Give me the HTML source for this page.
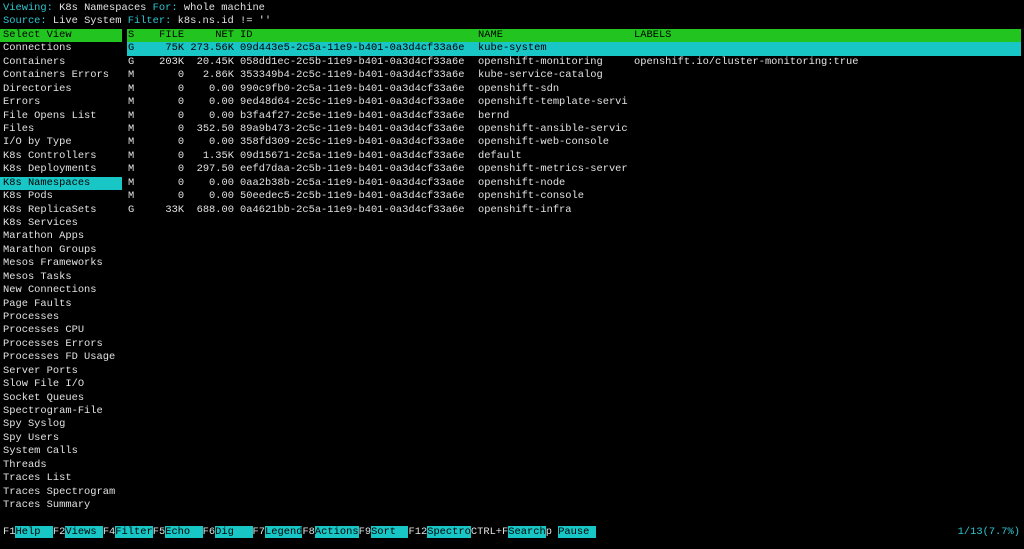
<!DOCTYPE html>
<html><head><meta charset="utf-8"><style>
html,body{margin:0;padding:0;background:#000;width:1024px;height:549px;overflow:hidden}
body{position:relative;font-family:"Liberation Mono","DejaVu Sans Mono",monospace;font-size:10.4px;color:#e2e2e2}
#w{position:absolute;left:0;top:1px;width:1024px;height:548px}
.r{position:absolute;left:0;width:1024px;height:13.43px;line-height:13.43px;white-space:pre}
.r span{position:absolute;top:0}
.c{color:#2fc6cf}
.a{left:3px}.s{left:128px}.i{left:240px}.n{left:478px}.l{left:634px}
.g{background:#22c520}.y{background:#18c6c6}
.bl{color:#000}
.h{background:#18c6c6;color:#000}
.bar{position:absolute;top:0;height:13.43px}
</style></head><body><div id="w">
<div class="r" style="top:0.5px"><span class="a"><span class="c" style="position:static">Viewing:</span> K8s Namespaces <span class="c" style="position:static">For:</span> whole machine</span></div>
<div class="r" style="top:14px"><span class="a"><span class="c" style="position:static">Source:</span> Live System <span class="c" style="position:static">Filter:</span> k8s.ns.id != ''</span></div>

<div class="r bl" style="top:27.9px"><div class="bar g" style="left:0;width:122px"></div><div class="bar g" style="left:127px;width:894px"></div><span class="a">Select View</span><span class="s">S    FILE     NET</span><span class="i">ID</span><span class="n">NAME</span><span class="l">LABELS</span></div>
<div class="r" style="top:41.3px"><div class="bar y" style="left:127px;width:894px"></div><span class="a">Connections</span><span class="s bl">G     75K 273.56K</span><span class="i bl">09d443e5-2c5a-11e9-b401-0a3d4cf33a6e</span><span class="n bl">kube-system</span></div>
<div class="r" style="top:54.7px"><span class="a">Containers</span><span class="s">G    203K  20.45K</span><span class="i">058dd1ec-2c5b-11e9-b401-0a3d4cf33a6e</span><span class="n">openshift-monitoring</span><span class="l">openshift.io/cluster-monitoring:true</span></div>
<div class="r" style="top:68.2px"><span class="a">Containers Errors</span><span class="s">M       0   2.86K</span><span class="i">353349b4-2c5c-11e9-b401-0a3d4cf33a6e</span><span class="n">kube-service-catalog</span></div>
<div class="r" style="top:81.6px"><span class="a">Directories</span><span class="s">M       0    0.00</span><span class="i">990c9fb0-2c5a-11e9-b401-0a3d4cf33a6e</span><span class="n">openshift-sdn</span></div>
<div class="r" style="top:95px"><span class="a">Errors</span><span class="s">M       0    0.00</span><span class="i">9ed48d64-2c5c-11e9-b401-0a3d4cf33a6e</span><span class="n">openshift-template-servi</span></div>
<div class="r" style="top:108.5px"><span class="a">File Opens List</span><span class="s">M       0    0.00</span><span class="i">b3fa4f27-2c5e-11e9-b401-0a3d4cf33a6e</span><span class="n">bernd</span></div>
<div class="r" style="top:121.9px"><span class="a">Files</span><span class="s">M       0  352.50</span><span class="i">89a9b473-2c5c-11e9-b401-0a3d4cf33a6e</span><span class="n">openshift-ansible-servic</span></div>
<div class="r" style="top:135.3px"><span class="a">I/O by Type</span><span class="s">M       0    0.00</span><span class="i">358fd309-2c5c-11e9-b401-0a3d4cf33a6e</span><span class="n">openshift-web-console</span></div>
<div class="r" style="top:148.8px"><span class="a">K8s Controllers</span><span class="s">M       0   1.35K</span><span class="i">09d15671-2c5a-11e9-b401-0a3d4cf33a6e</span><span class="n">default</span></div>
<div class="r" style="top:162.2px"><span class="a">K8s Deployments</span><span class="s">M       0  297.50</span><span class="i">eefd7daa-2c5b-11e9-b401-0a3d4cf33a6e</span><span class="n">openshift-metrics-server</span></div>
<div class="r" style="top:175.6px"><div class="bar y" style="left:0;width:122px"></div><span class="a bl">K8s Namespaces</span><span class="s">M       0    0.00</span><span class="i">0aa2b38b-2c5a-11e9-b401-0a3d4cf33a6e</span><span class="n">openshift-node</span></div>
<div class="r" style="top:189.1px"><span class="a">K8s Pods</span><span class="s">M       0    0.00</span><span class="i">50eedec5-2c5b-11e9-b401-0a3d4cf33a6e</span><span class="n">openshift-console</span></div>
<div class="r" style="top:202.5px"><span class="a">K8s ReplicaSets</span><span class="s">G     33K  688.00</span><span class="i">0a4621bb-2c5a-11e9-b401-0a3d4cf33a6e</span><span class="n">openshift-infra</span></div>
<div class="r" style="top:215.9px"><span class="a">K8s Services</span></div>
<div class="r" style="top:229.4px"><span class="a">Marathon Apps</span></div>
<div class="r" style="top:242.8px"><span class="a">Marathon Groups</span></div>
<div class="r" style="top:256.2px"><span class="a">Mesos Frameworks</span></div>
<div class="r" style="top:269.7px"><span class="a">Mesos Tasks</span></div>
<div class="r" style="top:283.1px"><span class="a">New Connections</span></div>
<div class="r" style="top:296.5px"><span class="a">Page Faults</span></div>
<div class="r" style="top:310px"><span class="a">Processes</span></div>
<div class="r" style="top:323.4px"><span class="a">Processes CPU</span></div>
<div class="r" style="top:336.8px"><span class="a">Processes Errors</span></div>
<div class="r" style="top:350.3px"><span class="a">Processes FD Usage</span></div>
<div class="r" style="top:363.7px"><span class="a">Server Ports</span></div>
<div class="r" style="top:377.1px"><span class="a">Slow File I/O</span></div>
<div class="r" style="top:390.6px"><span class="a">Socket Queues</span></div>
<div class="r" style="top:404px"><span class="a">Spectrogram-File</span></div>
<div class="r" style="top:417.4px"><span class="a">Spy Syslog</span></div>
<div class="r" style="top:430.9px"><span class="a">Spy Users</span></div>
<div class="r" style="top:444.3px"><span class="a">System Calls</span></div>
<div class="r" style="top:457.7px"><span class="a">Threads</span></div>
<div class="r" style="top:471.2px"><span class="a">Traces List</span></div>
<div class="r" style="top:484.6px"><span class="a">Traces Spectrogram</span></div>
<div class="r" style="top:498px"><span class="a">Traces Summary</span></div>
<div class="r" style="top:524.6px"><span class="a">F1<span class="h" style="position:static">Help  </span>F2<span class="h" style="position:static">Views </span>F4<span class="h" style="position:static">Filter</span>F5<span class="h" style="position:static">Echo  </span>F6<span class="h" style="position:static">Dig   </span>F7<span class="h" style="position:static">Legend</span>F8<span class="h" style="position:static">Actions</span>F9<span class="h" style="position:static">Sort  </span>F12<span class="h" style="position:static">Spectro</span>CTRL+F<span class="h" style="position:static">Search</span>p <span class="h" style="position:static">Pause </span></span><span class="c" style="right:4px">1/13(7.7%)</span></div>
</div></body></html>
